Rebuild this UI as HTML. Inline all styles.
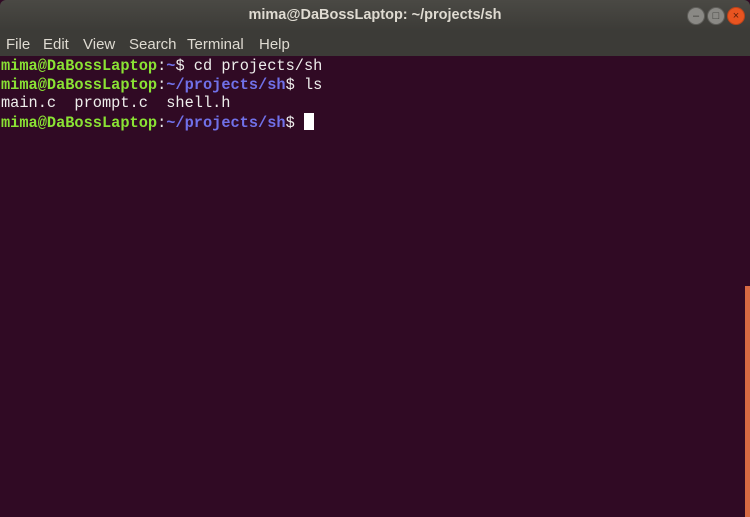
<!DOCTYPE html>
<html><head><style>
body{margin:0;width:750px;height:517px;overflow:hidden;background:#300a24;font-family:"Liberation Sans",sans-serif}
.title{position:absolute;left:0;top:0;width:750px;height:31px;background:linear-gradient(#4a4944,#3c3b37);border-radius:6px 6px 0 0;color:#dfdbd2;font-weight:bold;font-size:14.5px;text-align:center;line-height:31px}
.menu{position:absolute;left:0;top:31px;width:750px;height:25px;background:#3c3b37;color:#dfdbd2;font-size:15px;line-height:25px}
.menu span{position:absolute;top:1px}
.btn{position:absolute;top:7px;width:18px;height:18px;border-radius:50%;background:#8a8985;border:1px solid #5e5d59;box-sizing:border-box;color:#3c3b37;font-size:11px;line-height:16px;text-align:center}
.term{position:absolute;left:1px;top:57px;font-family:"Liberation Mono",monospace;font-size:15.3px;line-height:18.5px;color:#eeeeec;white-space:pre}
.g{color:#8ae234;font-weight:bold}.b{color:#7070e8;font-weight:bold}
.cur{display:inline-block;width:10px;height:17px;background:#fff;vertical-align:-3px}
.sb{position:absolute;left:745px;top:286px;width:5px;height:231px;background:#d76a43}
</style></head><body>
<div class="title">mima@DaBossLaptop: ~/projects/sh</div>
<div class="btn" style="left:687px">–</div>
<div class="btn" style="left:707px">□</div>
<div class="btn" style="left:727px;background:#e95420;border-color:#b9431a;color:#5a1e0a">×</div>
<div class="menu"><span style="left:6px">File</span><span style="left:43px">Edit</span><span style="left:83px">View</span><span style="left:129px">Search</span><span style="left:187px">Terminal</span><span style="left:259px">Help</span></div>
<div class="term"><span class="g">mima@DaBossLaptop</span>:<span class="b">~</span>$ cd projects/sh
<span class="g">mima@DaBossLaptop</span>:<span class="b">~/projects/sh</span>$ ls
main.c  prompt.c  shell.h
<span class="g">mima@DaBossLaptop</span>:<span class="b">~/projects/sh</span>$ <span class="cur"></span></div>
<div class="sb"></div>
</body></html>
